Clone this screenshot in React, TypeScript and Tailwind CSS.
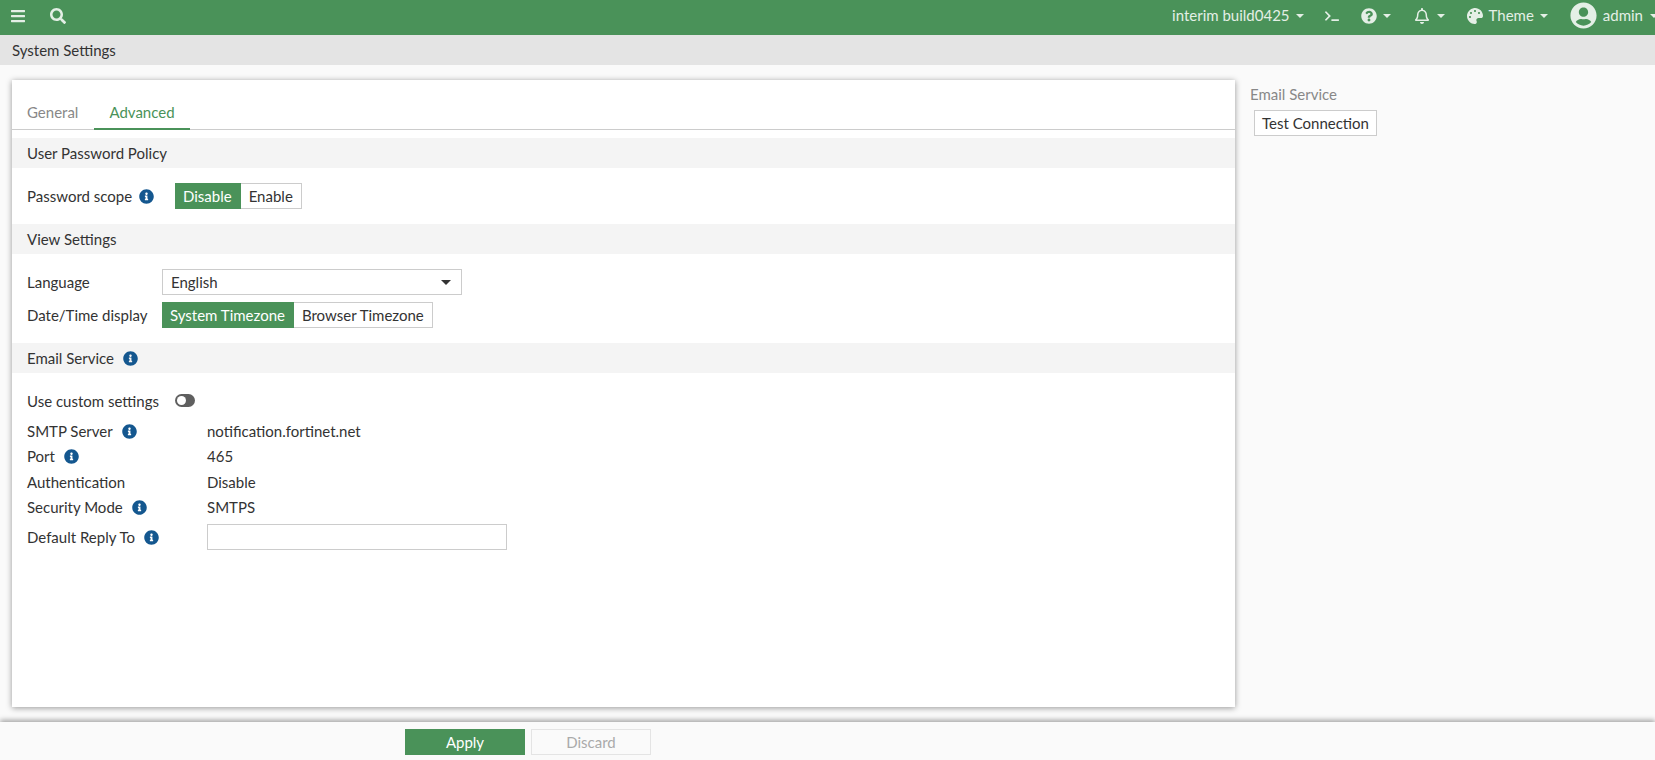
import type { ReactNode } from "react";
import {
  FaBars,
  FaSearch,
  FaQuestionCircle,
  FaRegBell,
  FaPalette,
  FaUserCircle,
  FaInfoCircle,
  FaTerminal,
} from "react-icons/fa";

function Caret({ className = "ml-[6px]" }: { className?: string }) {
  return <span className={`${className} inline-block h-0 w-0 border-x-[4px] border-t-[4px] border-x-transparent border-t-[#e4efe6]`} />;
}

function Info({ className = "ml-[9px]" }: { className?: string }) {
  return <FaInfoCircle className={`${className} shrink-0 text-[15px] text-[#14578f]`} />;
}

function Section({ children }: { children: ReactNode }) {
  return <div className="flex h-[30px] items-center bg-[#f4f4f4] pl-[15px]">{children}</div>;
}

function Toggle({ options }: { options: string[] }) {
  return (
    <div className="flex h-[26px]">
      {options.map((o, i) =>
        i === 0 ? (
          <div key={o} className="flex items-center justify-center border border-[#4a9259] bg-[#4a9259] pl-[7px] pr-[8px] text-white">
            {o}
          </div>
        ) : (
          <div key={o} className="flex items-center justify-center border border-l-0 border-[#ccc] bg-white px-2">
            {o}
          </div>
        ),
      )}
    </div>
  );
}

function InfoRow({ label, value, info, height = "h-[25px]" }: { label: string; value: string; info?: boolean; height?: string }) {
  return (
    <div className={`flex items-center ${height}`}>
      <div className="flex w-[180px] items-center">
        {label}
        {info && <Info />}
      </div>
      <div>{value}</div>
    </div>
  );
}

export default function App() {
  return (
    <div className="flex h-[760px] flex-col overflow-hidden bg-[#fafafa] font-['Lato',sans-serif] text-[15px] text-[#333]">
      <header className="flex h-[35px] shrink-0 items-center justify-between bg-[#4a9259] pb-[4px] text-[#e4efe6]">
        <div className="flex items-center pl-[10px]">
          <FaBars className="text-[16px]" />
          <FaSearch className="ml-[24px] text-[16px]" />
        </div>
        <div className="-mr-[3px] flex shrink-0 items-center">
          <span>interim build0425</span>
          <Caret />
          <FaTerminal className="ml-[21px] text-[14px]" />
          <FaQuestionCircle className="ml-[22px] text-[16px]" />
          <Caret />
          <FaRegBell className="ml-[23px] text-[16px]" />
          <Caret className="ml-[7px]" />
          <FaPalette className="ml-[22px] text-[16px]" />
          <span className="ml-[6px]">Theme</span>
          <Caret />
          <FaUserCircle className="ml-[22px] text-[27px]" />
          <span className="ml-[6px]">admin</span>
          <Caret className="ml-[7px]" />
        </div>
      </header>

      <div className="flex h-[30px] shrink-0 items-center bg-[#e4e4e4] pl-3">System Settings</div>

      <main className="flex min-h-0 flex-1 pt-[15px]">
        <div className="ml-3 h-[627px] w-[1223px] shrink-0 bg-white pt-[18px] shadow-[0_1px_6px_rgba(0,0,0,0.4)]">
          <div className="flex h-[32px] border-b border-[#ccc] pl-[15px]">
            <div className="flex h-[32px] items-center pb-[3px] text-[#888]">General</div>
            <div className="ml-[16px] flex h-[32px] items-center border-b-2 border-[#4a9259] px-[15px] pb-[1px] text-[#4a9259]">Advanced</div>
          </div>

          <div className="mt-[8px]">
            <Section>User Password Policy</Section>
          </div>
          <div className="mt-[15px] flex h-[26px] items-center pl-[15px]">
            <div className="flex w-[148px] items-center">
              Password scope
              <Info className="ml-[7px]" />
            </div>
            <Toggle options={["Disable", "Enable"]} />
          </div>

          <div className="mt-[15px]">
            <Section>View Settings</Section>
          </div>
          <div className="mt-[15px] flex h-[26px] items-center pl-[15px]">
            <div className="w-[135px]">Language</div>
            <div className="flex h-[26px] w-[300px] items-center justify-between border border-[#ccc] bg-white pl-[8px] pr-[10px]">
              English
              <span className="h-0 w-0 border-x-[5px] border-t-[5px] border-x-transparent border-t-[#333]" />
            </div>
          </div>
          <div className="mt-[7px] flex h-[26px] items-center pl-[15px]">
            <div className="w-[135px]">Date/Time display</div>
            <Toggle options={["System Timezone", "Browser Timezone"]} />
          </div>

          <div className="mt-[15px]">
            <Section>
              Email Service
              <Info />
            </Section>
          </div>
          <div className="pl-[15px]">
            <div className="mt-[15px] flex h-[26px] items-center">
              <div className="w-[148px]">Use custom settings</div>
              <div className="-mt-[2px] flex h-[13px] w-5 items-center rounded-full bg-[#5f5f5f] pl-[2px]">
                <span className="h-[9px] w-[9px] rounded-full bg-white" />
              </div>
            </div>
            <div className="mt-[5px]">
              <InfoRow label="SMTP Server" value="notification.fortinet.net" info />
              <InfoRow label="Port" value="465" info />
              <InfoRow label="Authentication" value="Disable" height="h-[26px]" />
              <InfoRow label="Security Mode" value="SMTPS" info />
            </div>
            <div className="mt-[4px] flex h-[26px] items-center">
              <div className="flex w-[180px] items-center">
                Default Reply To
                <Info />
              </div>
              <div className="h-[26px] w-[300px] border border-[#ccc] bg-white" />
            </div>
          </div>
        </div>

        <aside className="ml-[15px] pt-[1px]">
          <div className="flex h-[26px] items-center text-[#888]">Email Service</div>
          <div className="ml-1 mt-[3px] flex h-[26px] w-[123px] items-center justify-center border border-[#ccc] bg-white">Test Connection</div>
        </aside>
      </main>

      <footer className="flex h-[38px] shrink-0 items-start bg-[#fafafa] pl-[405px] pt-[7px] shadow-[0_-2px_5px_rgba(0,0,0,0.35)]">
        <div className="flex h-[26px] w-[120px] items-center justify-center bg-[#4a9259] text-white">Apply</div>
        <div className="ml-[6px] flex h-[26px] w-[120px] items-center justify-center border border-[#e4e4e4] text-[#aaa]">Discard</div>
      </footer>
    </div>
  );
}
